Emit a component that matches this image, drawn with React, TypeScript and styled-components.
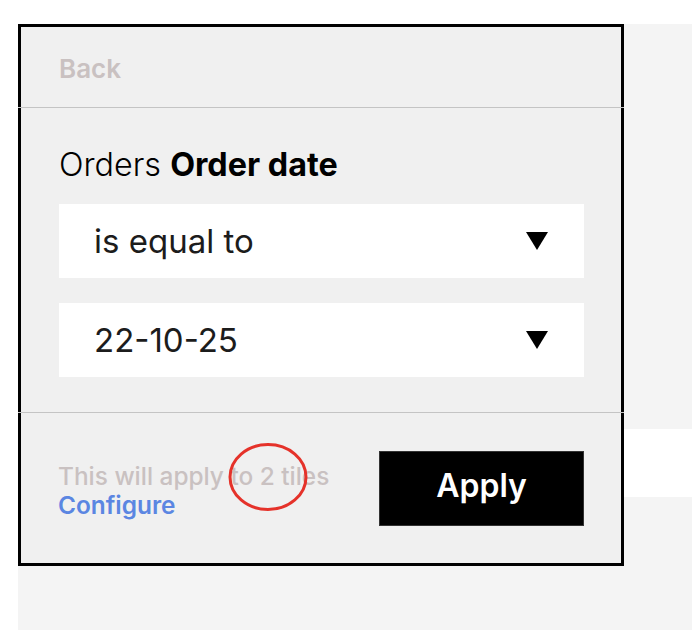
import React from 'react';
import styled, { createGlobalStyle } from 'styled-components';

const GlobalStyle = createGlobalStyle`
  html, body {
    margin: 0;
    padding: 0;
    background: #ffffff;
    font-family: Inter, 'Noto Sans', 'Liberation Sans', sans-serif;
  }
`;

const conditions = ['is equal to', '22-10-25'];

const App = () => {
  return (
    <Page>
      <GlobalStyle />
      <Canvas>
        <Panel>
          <Header>
            <BackLink>Back</BackLink>
          </Header>
          <Divider />
          <Body>
            <Title>
              <span className="light">Orders</span> <span className="bold">Order date</span>
            </Title>
            <Fields>
              {conditions.map((value) => (
                <SelectBox key={value}>
                  <span>{value}</span>
                  <Caret width="22" height="18" viewBox="0 0 22 18">
                    <polygon points="0,0 22,0 11,18" fill="#000" />
                  </Caret>
                </SelectBox>
              ))}
            </Fields>
          </Body>
          <Divider />
          <Footer>
            <Note>
              <NoteText>This will apply to 2 tiles</NoteText>
              <ConfigureLink>Configure</ConfigureLink>
              <Marker width="80" height="70" viewBox="0 0 80 70">
                <ellipse cx="40" cy="35" rx="38" ry="32.5" fill="none" stroke="#e5322a" strokeWidth="3" />
              </Marker>
            </Note>
            <ApplyButton>Apply</ApplyButton>
          </Footer>
        </Panel>
        <Side>
          <SideTile />
        </Side>
      </Canvas>
    </Page>
  );
};

export default App;

const Page = styled.div`
  padding: 24px 0 0 18px;
`;

const Canvas = styled.div`
  display: flex;
  height: 606px;
  background: #f4f4f4;
`;

const Panel = styled.div`
  flex: none;
  align-self: flex-start;
  display: flex;
  flex-direction: column;
  width: 600px;
  border: 3px solid #000;
  background: #f0f0f0;
`;

const Header = styled.div`
  display: flex;
  align-items: center;
  height: 80px;
  padding-left: 38px;
`;

const BackLink = styled.span`
  font-size: 26px;
  font-weight: 600;
  color: #c9c1c1;
  transform: translateY(1px);
`;

const Divider = styled.div`
  height: 1px;
  margin: 0 -3px;
  background: #c4c4c4;
  position: relative;
`;

const Body = styled.div`
  display: flex;
  flex-direction: column;
  padding: 37px 37px 35px 38px;
`;

const Title = styled.div`
  font-size: 32.3px;
  line-height: 40px;
  color: #000;
  margin-bottom: 19px;
  .light {
    font-weight: 300;
  }
  .bold {
    font-weight: 700;
  }
`;

const Fields = styled.div`
  display: flex;
  flex-direction: column;
  gap: 25px;
`;

const SelectBox = styled.div`
  display: flex;
  align-items: center;
  justify-content: space-between;
  height: 74px;
  padding: 0 36px 0 35px;
  background: #fff;
  font-size: 33px;
  color: #1c1c1c;
`;

const Caret = styled.svg`
  display: block;
  flex: none;
`;

const Footer = styled.div`
  display: flex;
  align-items: center;
  justify-content: space-between;
  height: 150px;
  padding: 0 37px;
`;

const Note = styled.div`
  position: relative;
  display: flex;
  flex-direction: column;
  margin-top: 6px;
  font-size: 24.4px;
  line-height: 29px;
`;

const NoteText = styled.span`
  font-weight: 500;
  color: #c9c1c1;
`;

const ConfigureLink = styled.span`
  font-weight: 600;
  color: #5b86e2;
`;

const Marker = styled.svg`
  position: absolute;
  left: 170px;
  top: -20px;
`;

const ApplyButton = styled.button`
  width: 205px;
  height: 75px;
  padding: 0 0 6px;
  border: 1px solid #333;
  background: #000;
  color: #fff;
  font-family: Inter, 'Noto Sans', 'Liberation Sans', sans-serif;
  font-size: 32px;
  font-weight: 600;
  cursor: pointer;
`;

const Side = styled.div`
  flex: 1;
  padding-top: 405px;
`;

const SideTile = styled.div`
  height: 68px;
  background: #fff;
`;
